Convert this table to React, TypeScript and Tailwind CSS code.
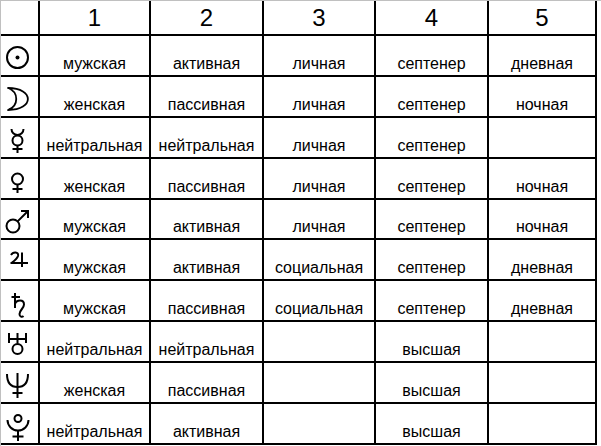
import React from 'react';

type Row = { sym: React.ReactNode; cells: string[] };

const st = { fill: 'none', stroke: '#000', strokeWidth: 2 } as const;

// планетные знаки, координаты в системе ячейки 37x39
const Sun = () => (
  <g>
    <circle cx={16.5} cy={21.5} r={10.5} {...st} />
    <circle cx={16.5} cy={21.5} r={2} fill="#000" />
  </g>
);

const Moon = () => (
  <path
    d="M7 11 C33.5 11 33.5 33 7 33 C18 29 18 15 7 11 Z"
    fill="none"
    stroke="#000"
    strokeWidth={1.8}
    strokeLinejoin="round"
  />
);

const Mercury = () => (
  <g {...st}>
    <path d="M10.5 11 A6 6 0 0 0 22.5 11" />
    <circle cx={16.5} cy={22.5} r={5} />
    <path d="M16.5 27.5 V35 M11.5 31 H21.5" />
  </g>
);

const Venus = () => (
  <g {...st}>
    <circle cx={16.5} cy={20} r={5.5} />
    <path d="M16.5 25.5 V34 M11.5 30 H21.5" />
  </g>
);

const Mars = () => (
  <g {...st}>
    <circle cx={12} cy={26} r={6.5} />
    <path d="M16.6 21.4 L27 11 M20 11 H27 V18" />
  </g>
);

const Jupiter = () => (
  <g {...st}>
    <path d="M10 15 C12 11.5 18 11.5 17 16 C16 19 12.5 21.5 10.5 23" />
    <path d="M9.5 23 H27 M21 12.5 V27" />
  </g>
);

const Saturn = () => (
  <g {...st}>
    <path d="M14 12 V27 M10.5 16 H19" />
    <path d="M14 23 C15.5 18.5 23 18 23 23.5 C23 27.5 18.5 29 18.5 33 C18.5 36 21 36.5 22.5 35" />
  </g>
);

const Uranus = () => (
  <g {...st}>
    <path d="M8 11 V21 M25 11 V21 M8 17 H25 M16.5 11 V21.5" />
    <circle cx={16.5} cy={27} r={5} />
  </g>
);

const Neptune = () => (
  <g {...st}>
    <path d="M6 11 C6 20 10 24 16.5 24 C23 24 27 20 27 11" />
    <path d="M16.5 10 V35 M11.5 30 H21.5" />
  </g>
);

const Pluto = () => (
  <g {...st}>
    <circle cx={17} cy={14.5} r={3.5} />
    <path d="M6.5 16 A10.5 10.5 0 0 0 27.5 16" />
    <path d="M17 26.5 V37 M11.5 32.5 H22.5" />
  </g>
);

const rows: Row[] = [
  { sym: <Sun />, cells: ['мужская', 'активная', 'личная', 'септенер', 'дневная'] },
  { sym: <Moon />, cells: ['женская', 'пассивная', 'личная', 'септенер', 'ночная'] },
  { sym: <Mercury />, cells: ['нейтральная', 'нейтральная', 'личная', 'септенер', ''] },
  { sym: <Venus />, cells: ['женская', 'пассивная', 'личная', 'септенер', 'ночная'] },
  { sym: <Mars />, cells: ['мужская', 'активная', 'личная', 'септенер', 'ночная'] },
  { sym: <Jupiter />, cells: ['мужская', 'активная', 'социальная', 'септенер', 'дневная'] },
  { sym: <Saturn />, cells: ['мужская', 'пассивная', 'социальная', 'септенер', 'дневная'] },
  { sym: <Uranus />, cells: ['нейтральная', 'нейтральная', '', 'высшая', ''] },
  { sym: <Neptune />, cells: ['женская', 'пассивная', '', 'высшая', ''] },
  { sym: <Pluto />, cells: ['нейтральная', 'активная', '', 'высшая', ''] },
];

export default function App() {
  return (
    <div
      className="w-[601px] h-[446px] bg-white border-t border-l border-[#c0c0c0] text-black"
      style={{ fontFamily: '"Liberation Sans", Arial, sans-serif' }}
    >
      <div className="inline-grid bg-black gap-[2px] pr-[2px] pb-[2px] grid-cols-[37px_109px_111px_110px_111px_106px] grid-rows-[33px_39px_39px_39px_39px_38px_39px_39px_39px_39px_39px]">
        <div className="bg-white" />
        {['1', '2', '3', '4', '5'].map((n) => (
          <div key={n} className="bg-white flex items-center justify-center text-[24px] leading-[28px]">
            {n}
          </div>
        ))}
        {rows.map((r, i) => (
          <React.Fragment key={i}>
            <div className="bg-white">
              <svg width={37} height={39} viewBox="0 0 37 39" className="block">
                {r.sym}
              </svg>
            </div>
            {r.cells.map((c, j) => (
              <div
                key={j}
                className="bg-white flex items-end justify-center pb-[2px] text-[16px] leading-[18px] whitespace-nowrap overflow-hidden"
              >
                {c}
              </div>
            ))}
          </React.Fragment>
        ))}
      </div>
    </div>
  );
}
